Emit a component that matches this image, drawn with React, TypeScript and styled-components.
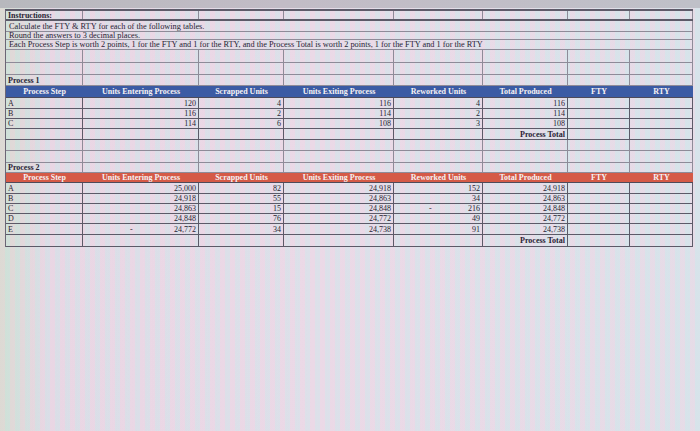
import React from 'react';
import styled, { createGlobalStyle } from 'styled-components';

const COLS = '77px 116px 85px 110px 89px 85px 62px 63px';

const GlobalStyle = createGlobalStyle`
  html, body {
    margin: 0;
    padding: 0;
  }
  body {
    width: 700px;
    height: 431px;
    overflow: hidden;
    font-family: "Liberation Serif", "DejaVu Serif", serif;
    color: #2a2434;
  }
`;

const Page = styled.div`
  width: 700px;
  height: 431px;
  background:
    repeating-linear-gradient(90deg, rgba(255, 185, 220, 0.18) 0 5px, rgba(175, 225, 235, 0.18) 5px 10px),
    linear-gradient(90deg, #d5e1d2 0%, #e4dde6 7%, #e7e0e9 45%, #e0e4ea 100%);
`;

const TopStrip = styled.div`
  height: 8px;
  background: linear-gradient(90deg, #b7b8bd, #c2bcc6 40%, #bfc0c8);
`;

const Sheet = styled.div`
  margin: 1px 0 0 5px;
  width: 687px;
  border-top: 2px solid #5e5b6a;
  border-left: 1px solid #6a6776;
`;

type Tone = 'light' | 'dark';

const Row = styled.div<{ $h: number; $tone?: Tone; $thick?: boolean }>`
  display: grid;
  grid-template-columns: ${COLS};
  height: ${p => p.$h}px;
  box-sizing: border-box;
  border-bottom: ${p => (p.$thick ? 2 : 1)}px solid ${p => (p.$tone === 'dark' ? '#5c5a68' : '#8e8b98')};
`;

const Cell = styled.div<{ $align?: 'left' | 'right' | 'center'; $bold?: boolean; $tone?: Tone }>`
  display: flex;
  align-items: center;
  justify-content: ${p => (p.$align === 'right' ? 'flex-end' : p.$align === 'center' ? 'center' : 'flex-start')};
  padding: 0 2px;
  border-right: 1px solid ${p => (p.$tone === 'dark' ? '#5c5a68' : '#8e8b98')};
  font-size: 8px;
  font-weight: ${p => (p.$bold ? 700 : 400)};
  white-space: nowrap;
  overflow: hidden;
`;

const Wide = styled(Cell)`
  grid-column: 1 / -1;
  font-size: 8.3px;
  padding-left: 3px;
`;

const Header = styled(Row)<{ $color: string }>`
  background: ${p => p.$color};
  border-bottom-color: #4e4b5a;
`;

const HeadCell = styled.div`
  display: flex;
  align-items: center;
  justify-content: center;
  color: #f6f2f4;
  font-size: 8px;
  font-weight: 700;
  white-space: nowrap;
`;

const Dash = styled.span<{ $left: number }>`
  margin-left: ${p => p.$left}px;
  margin-right: auto;
`;

const HEADS = [
  'Process Step',
  'Units Entering Process',
  'Scrapped Units',
  'Units Exiting Process',
  'Reworked Units',
  'Total Produced',
  'FTY',
  'RTY',
];

const EmptyRow = ({ h }: { h: number }) => (
  <Row $h={h}>
    {HEADS.map((_, i) => (
      <Cell key={i} />
    ))}
  </Row>
);

const LabelRow = ({ h, label }: { h: number; label: string }) => (
  <Row $h={h}>
    <Cell $bold>{label}</Cell>
    {HEADS.slice(1).map((_, i) => (
      <Cell key={i} />
    ))}
  </Row>
);

type Step = {
  step: string;
  values: React.ReactNode[];
};

const DataRow = ({ h, row }: { h: number; row: Step }) => (
  <Row $h={h} $tone="dark">
    <Cell $tone="dark">{row.step}</Cell>
    {row.values.map((v, i) => (
      <Cell key={i} $tone="dark" $align="right">
        {v}
      </Cell>
    ))}
    <Cell $tone="dark" />
    <Cell $tone="dark" />
  </Row>
);

const TotalRow = ({ h }: { h: number }) => (
  <Row $h={h} $tone="dark">
    {HEADS.slice(0, 5).map((_, i) => (
      <Cell key={i} $tone="dark" />
    ))}
    <Cell $tone="dark" $align="right" $bold>
      Process Total
    </Cell>
    <Cell $tone="dark" />
    <Cell $tone="dark" />
  </Row>
);

const processOne: Step[] = [
  { step: 'A', values: ['120', '4', '116', '4', '116'] },
  { step: 'B', values: ['116', '2', '114', '2', '114'] },
  { step: 'C', values: ['114', '6', '108', '3', '108'] },
];

const processTwo: Step[] = [
  { step: 'A', values: ['25,000', '82', '24,918', '152', '24,918'] },
  { step: 'B', values: ['24,918', '55', '24,863', '34', '24,863'] },
  {
    step: 'C',
    values: [
      '24,863',
      '15',
      '24,848',
      <>
        <Dash $left={33}>-</Dash>
        <span>216</span>
      </>,
      '24,848',
    ],
  },
  { step: 'D', values: ['24,848', '76', '24,772', '49', '24,772'] },
  {
    step: 'E',
    values: [
      <>
        <Dash $left={45}>-</Dash>
        <span>24,772</span>
      </>,
      '34',
      '24,738',
      '91',
      '24,738',
    ],
  },
];

export default function App() {
  return (
    <Page>
      <GlobalStyle />
      <TopStrip />
      <Sheet>
        <Row $h={10} $thick $tone="dark">
          <Cell $bold>Instructions:</Cell>
          {HEADS.slice(1).map((_, i) => (
            <Cell key={i} />
          ))}
        </Row>
        <Row $h={11}>
          <Wide>Calculate the FTY &amp; RTY for each of the following tables.</Wide>
        </Row>
        <Row $h={8}>
          <Wide>Round the answers to 3 decimal places.</Wide>
        </Row>
        <Row $h={10}>
          <Wide>
            Each Process Step is worth 2 points, 1 for the FTY and 1 for the RTY, and the Process Total is worth 2
            points, 1 for the FTY and 1 for the RTY
          </Wide>
        </Row>
        <EmptyRow h={13} />
        <EmptyRow h={12} />

        <LabelRow h={11} label="Process 1" />
        <Header $h={12} $color="#3b5ba4">
          {HEADS.map(h => (
            <HeadCell key={h}>{h}</HeadCell>
          ))}
        </Header>
        {processOne.map((r, i) => (
          <DataRow key={r.step} h={i === 0 ? 11 : 10} row={r} />
        ))}
        <TotalRow h={11} />
        <EmptyRow h={11} />
        <EmptyRow h={12} />

        <LabelRow h={10} label="Process 2" />
        <Header $h={10} $color="#d55a47">
          {HEADS.map(h => (
            <HeadCell key={h}>{h}</HeadCell>
          ))}
        </Header>
        {processTwo.map((r, i) => (
          <DataRow key={r.step} h={i === 0 || i === 4 ? 11 : 10} row={r} />
        ))}
        <TotalRow h={12} />
      </Sheet>
    </Page>
  );
}
